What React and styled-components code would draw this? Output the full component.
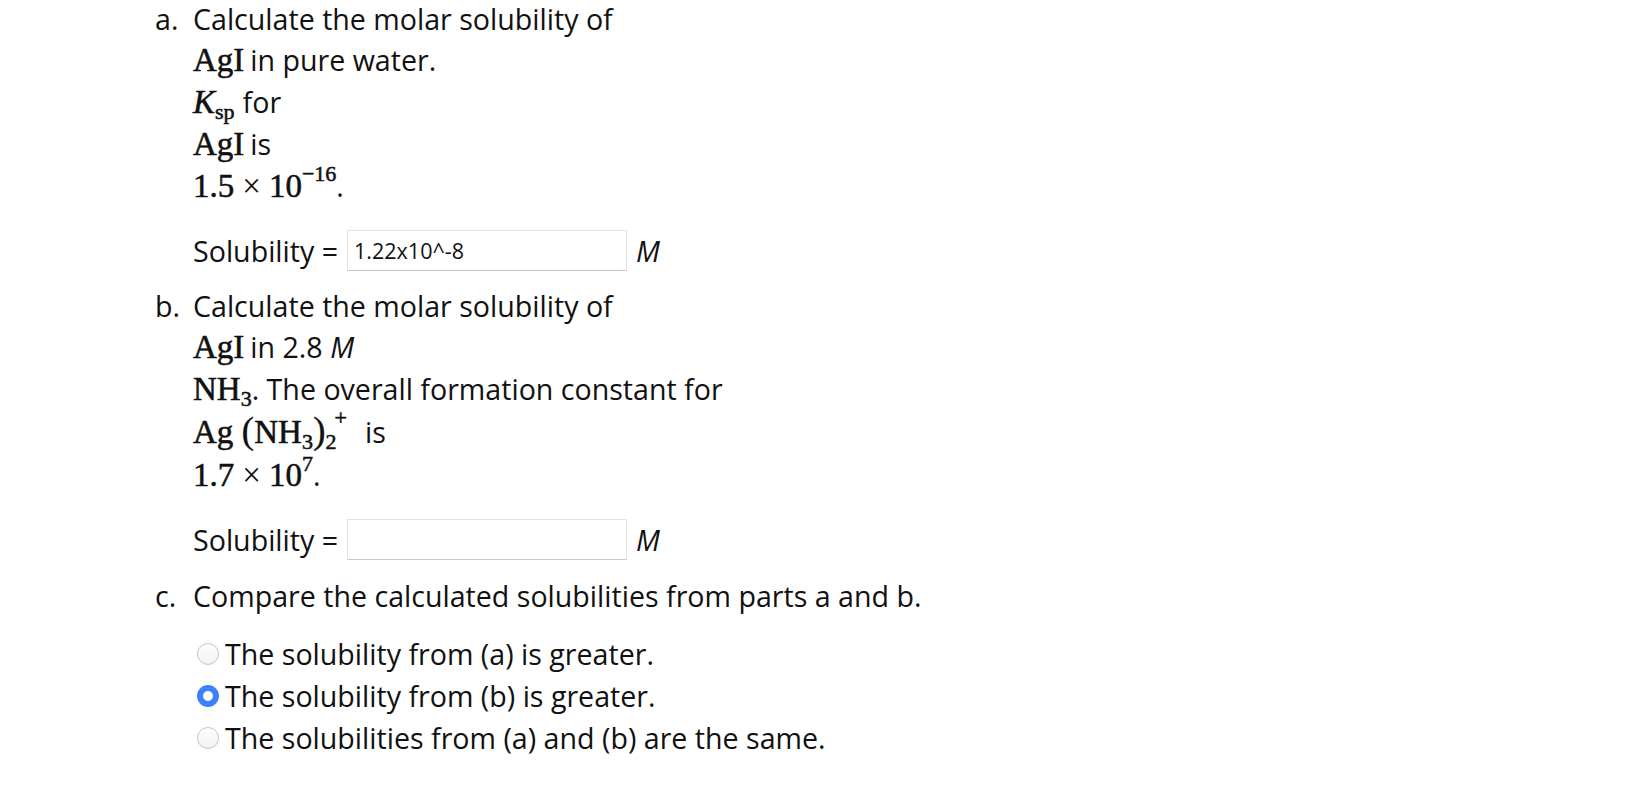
import React from 'react'
import styled, { createGlobalStyle } from 'styled-components'

const GlobalStyle = createGlobalStyle`
  html, body {
    margin: 0;
    padding: 0;
    background: #fff;
  }
  body {
    font-family: "Open Sans", "Liberation Sans", sans-serif;
    color: #111;
  }
`

const Page = styled.div`
  padding: 0 0 0 155px;
  margin-top: -2px;
  width: 1646px;
  height: 804px;
  box-sizing: border-box;
  overflow: hidden;
`

const Part = styled.div`
  display: grid;
  grid-template-columns: 38px 1fr;
  margin-top: ${p => p.top || 0}px;
`

const Label = styled.div`
  font-size: 28.6px;
  line-height: 41px;
`

const Body = styled.div`
  display: flex;
  flex-direction: column;
`

const Line = styled.div`
  font-size: 28.6px;
  line-height: ${p => p.lh || 41}px;
  white-space: nowrap;
`

const Math = styled.span`
  font-family: "Liberation Serif", "DejaVu Serif", serif;
  font-size: 33px;
  -webkit-text-stroke: 0.55px #111;
  margin-right: ${p => p.gap || 0}px;
`

const Ital = styled.i`
  font-style: italic;
`

const Sub = styled.span`
  font-size: 22px;
  vertical-align: -6px;
  line-height: 0;
`

const Sup = styled.span`
  font-size: 22px;
  vertical-align: ${p => p.up || 15}px;
  line-height: 0;
  margin-left: ${p => p.left || 0}px;
`

const Paren = styled.span`
  font-size: 38px;
  line-height: 0;
  -webkit-text-stroke: 0.2px #111;
`

const Times = styled.span`
  margin: 0 8px;
  -webkit-text-stroke: 0;
`

const AnswerRow = styled.div`
  display: flex;
  align-items: center;
  height: 41px;
  margin-top: ${p => p.top || 0}px;
  font-size: 28.6px;
`

const Field = styled.div`
  box-sizing: border-box;
  width: 280px;
  height: 41px;
  margin-left: 9px;
  border: 1px solid #e3e3e3;
  border-bottom-color: #c8c8c8;
  padding: 0 6px;
  display: flex;
  align-items: center;
  font-size: 21.5px;
  color: #111;
`

const Unit = styled.span`
  font-style: italic;
  margin-left: 9px;
`

const Options = styled.div`
  display: flex;
  flex-direction: column;
  margin-top: 16px;
  padding-left: 4px;
`

const Option = styled.label`
  display: flex;
  align-items: center;
  height: 42px;
  font-size: 28.6px;
`

const Radio = styled.span`
  box-sizing: border-box;
  width: 22px;
  height: 22px;
  border-radius: 50%;
  margin-right: 6px;
  margin-top: 2px;
  border: ${p => (p.checked ? '6.5px solid #3b82f6' : '1px solid #c6c6c6')};
  background: ${p => (p.checked ? '#fff' : 'linear-gradient(#fff, #f1f1f1)')};
`

export default function App() {
  return (
    <>
      <GlobalStyle />
      <Page>
        <Part>
          <Label>a.</Label>
          <Body>
            <Line>Calculate the molar solubility of</Line>
            <Line><Math gap={6}>AgI</Math>in pure water.</Line>
            <Line>
              <Math gap={8}><Ital>K</Ital><Sub>sp</Sub></Math>for
            </Line>
            <Line><Math gap={6}>AgI</Math>is</Line>
            <Line>
              <Math>1.5<Times>×</Times>10<Sup up={16}>−16</Sup></Math>.
            </Line>
            <AnswerRow top={23}>
              Solubility =
              <Field>1.22x10^-8</Field>
              <Unit>M</Unit>
            </AnswerRow>
          </Body>
        </Part>

        <Part top={14}>
          <Label>b.</Label>
          <Body>
            <Line>Calculate the molar solubility of</Line>
            <Line><Math gap={6}>AgI</Math>in 2.8 <Ital>M</Ital></Line>
            <Line><Math>NH<Sub>3</Sub></Math>. The overall formation constant for</Line>
            <Line lh={44}>
              <Math gap={18}>
                Ag <Paren>(</Paren>NH<Sub>3</Sub><Paren>)</Paren>
                <Sub>2</Sub><Sup up={18} left={-2}>+</Sup>
              </Math>is
            </Line>
            <Line lh={42}>
              <Math>1.7<Times>×</Times>10<Sup>7</Sup></Math>.
            </Line>
            <AnswerRow top={23}>
              Solubility =
              <Field />
              <Unit>M</Unit>
            </AnswerRow>
          </Body>
        </Part>

        <Part top={15}>
          <Label>c.</Label>
          <Body>
            <Line>Compare the calculated solubilities from parts a and b.</Line>
            <Options>
              <Option><Radio />The solubility from (a) is greater.</Option>
              <Option><Radio checked />The solubility from (b) is greater.</Option>
              <Option><Radio />The solubilities from (a) and (b) are the same.</Option>
            </Options>
          </Body>
        </Part>
      </Page>
    </>
  )
}
